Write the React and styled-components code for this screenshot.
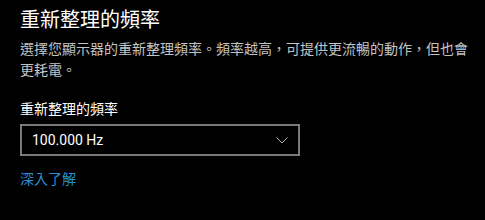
import React from "react"
import styled, { createGlobalStyle } from "styled-components"

const GlobalStyle = createGlobalStyle`
  html, body {
    margin: 0;
    padding: 0;
    background: #000;
  }
  body {
    font-family: "Noto Sans CJK TC", "Noto Sans", sans-serif;
    color: #fff;
  }
`

const Page = styled.div`
  width: 485px;
  height: 220px;
  box-sizing: border-box;
  padding: 5px 0 0 20px;
  background: #000;
  display: flex;
  flex-direction: column;
  align-items: flex-start;
`

const Title = styled.h1`
  margin: 0;
  font-size: 20px;
  line-height: 28px;
  font-weight: 400;
  color: #fff;
`

const Description = styled.p`
  margin: 5px 0 0 0;
  max-width: 458px;
  font-size: 14px;
  line-height: 21px;
  color: #c4c4c4;
`

const Label = styled.label`
  margin-top: 18px;
  font-size: 14px;
  line-height: 20px;
  color: #fff;
`

const Select = styled.button`
  margin-top: 6px;
  width: 280px;
  height: 32px;
  box-sizing: border-box;
  padding: 0 10px 0 10px;
  border: 2px solid #7a7a7a;
  background: #000;
  color: #fff;
  display: flex;
  align-items: center;
  justify-content: space-between;
  font-family: Roboto, "Noto Sans", sans-serif;
  font-size: 14px;
  cursor: pointer;
`

const Chevron = styled.svg`
  width: 12px;
  height: 7px;
`

const Link = styled.a`
  margin-top: 12px;
  font-size: 14px;
  line-height: 20px;
  color: #2a8fd4;
  text-decoration: none;
`

export default function App() {
  return (
    <>
      <GlobalStyle />
      <Page>
        <Title>重新整理的頻率</Title>
        <Description>
          選擇您顯示器的重新整理頻率。頻率越高，可提供更流暢的動作，但也會更耗電。
        </Description>
        <Label>重新整理的頻率</Label>
        <Select>
          <span>100.000 Hz</span>
          <Chevron viewBox="0 0 12 7">
            <path d="M0.5 0.5 L6 6 L11.5 0.5" fill="none" stroke="#b0b0b0" strokeWidth="1" />
          </Chevron>
        </Select>
        <Link href="#">深入了解</Link>
      </Page>
    </>
  )
}
